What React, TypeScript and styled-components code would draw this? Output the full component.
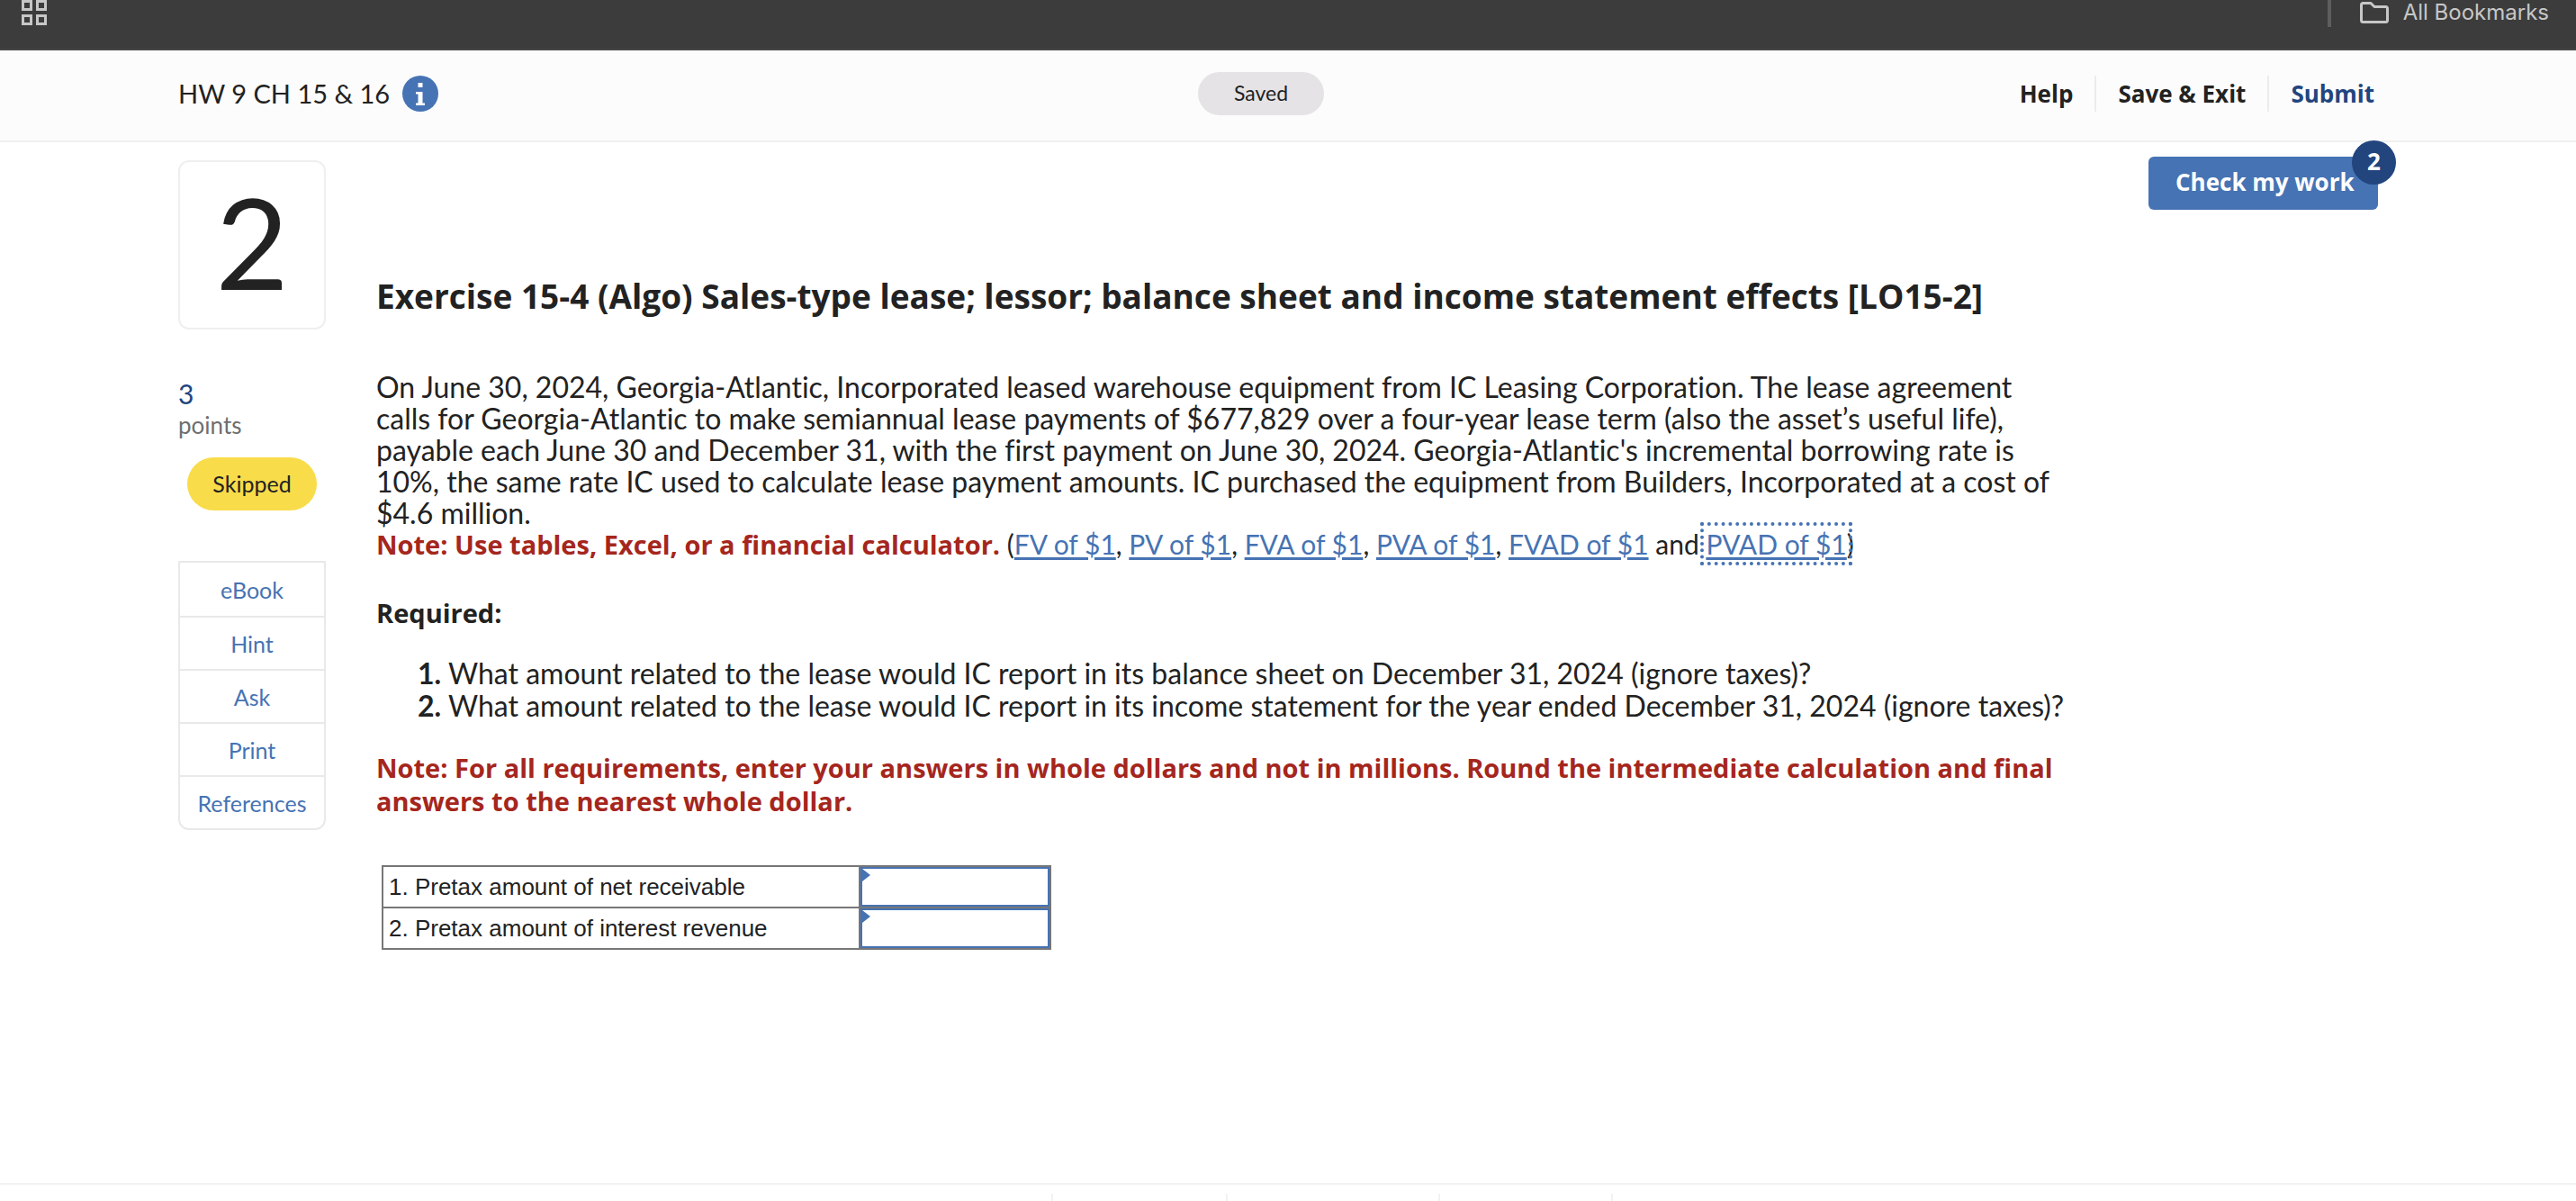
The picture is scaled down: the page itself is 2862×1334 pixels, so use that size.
import React from "react";
import styled, { createGlobalStyle } from "styled-components";

const ink = "#222222";
const blue = "#4673b3";
const navy = "#22457e";
const red = "#a5261d";
const line = "#e9e9e9";
const grid = "#777777";
const boldFamily = `"Open Sans", Lato, sans-serif`;

const GlobalStyle = createGlobalStyle`
  * { box-sizing: border-box; }
  body {
    margin: 0;
    background: #fff;
    color: ${ink};
    font-family: Lato, "Open Sans", sans-serif;
    font-variant-ligatures: none;
  }
  button { font-family: inherit; border: 0; background: none; padding: 0; cursor: pointer; }
  a { color: inherit; text-decoration: none; }
`;

const Page = styled.div`
  min-height: 100vh;
  display: flex;
  flex-direction: column;
`;

const BookmarksBar = styled.div`
  height: 56px;
  background: #3c3c3c;
  border-bottom: 2px solid #464646;
  display: flex;
  justify-content: space-between;
  align-items: flex-start;
  padding: 0 30px 0 24px;
`;

const BarIconButton = styled.button`
  display: block;
  line-height: 0;
`;

const AllBookmarks = styled.button`
  height: 30px;
  border-left: 4px solid #5e5e5e;
  padding: 0 0 2px 32px;
  display: flex;
  align-items: center;
  gap: 16px;
  color: #c7c7c7;
  font: 24px/28px Inter, sans-serif;
`;

const Header = styled.header`
  height: 102px;
  background: #fcfcfc;
  border-bottom: 2px solid #f0f0f0;
  padding: 0 224px 4px 198px;
  display: grid;
  grid-template-columns: 1133fr auto 1167fr;
  align-items: center;
`;

const Assignment = styled.div`
  display: flex;
  align-items: center;
  gap: 14px;
`;

const AssignmentName = styled.h1`
  margin: 0;
  font-size: 29px;
  font-weight: 400;
  line-height: 40px;
`;

const SavedPill = styled.div`
  width: 140px;
  height: 48px;
  border-radius: 24px;
  background: #e5e3e6;
  font-size: 23px;
  line-height: 46px;
  text-align: center;
`;

const HeaderNav = styled.nav`
  display: flex;
  justify-content: flex-end;
`;

const HeaderAction = styled.button<{ $primary?: boolean }>`
  height: 40px;
  padding: 0 24px;
  color: ${(p) => (p.$primary ? navy : ink)};
  font-family: ${boldFamily};
  font-size: 26px;
  font-weight: 700;
  line-height: 36px;
  & + & { border-left: 2px solid #ececec; }
  &:last-child { padding-right: 0; }
`;

const Main = styled.main`
  flex: 1;
  display: flex;
  padding: 0 220px 0 198px;
`;

const Sidebar = styled.aside`
  flex: 0 0 164px;
  padding-top: 20px;
`;

const QuestionNumber = styled.div`
  height: 188px;
  border: 2px solid #efefef;
  border-radius: 12px;
  display: flex;
  justify-content: center;
  font-size: 140px;
  line-height: 176px;
`;

const Points = styled.p`
  margin: 54px 0 0;
  color: #6e6e6e;
  font-size: 26px;
  line-height: 35px;
`;

const PointsValue = styled.span`
  display: block;
  color: ${navy};
  font-size: 30px;
`;

const SkippedPill = styled.div`
  margin: 18px 10px 56px;
  height: 59px;
  border-radius: 30px;
  background: #f9dc4a;
  font-size: 25px;
  line-height: 59px;
  text-align: center;
`;

const Tools = styled.nav`
  border: 2px solid ${line};
  border-radius: 0 0 12px 12px;
  display: flex;
  flex-direction: column;
`;

const Tool = styled.button`
  height: 59px;
  color: ${blue};
  font-size: 25px;
  line-height: 36px;
  & + & { border-top: 2px solid ${line}; }
`;

const Content = styled.article`
  flex: 1;
  max-width: 1890px;
  padding: 149px 0 0 56px;
  font-size: 32px;
  line-height: 35px;
`;

const Title = styled.h2`
  margin: 0 0 61px;
  font-family: ${boldFamily};
  font-size: 37px;
  font-weight: 700;
  line-height: 44px;
  white-space: nowrap;
`;

const Paragraph = styled.p`
  margin: 0;
  white-space: nowrap;
`;

const TablesLine = styled(Paragraph)`
  font-size: 30px;
`;

const Note = styled.strong`
  color: ${red};
  font-family: ${boldFamily};
  font-size: 29px;
  font-weight: 700;
`;

const TableLink = styled.a<{ $focused?: boolean }>`
  color: ${blue};
  text-decoration: underline;
  text-decoration-thickness: 3px;
  text-underline-offset: 3px;
  ${(p) => p.$focused && `outline: 4px dotted ${blue}; outline-offset: 2px;`}
`;

const Required = styled.h3`
  margin: 41px 0 31px;
  font-family: ${boldFamily};
  font-size: 29px;
  font-weight: 700;
  line-height: 36px;
`;

const Requirements = styled.ol`
  margin: 0 0 32px;
  padding: 0 0 0 80px;
  line-height: 36px;
  white-space: nowrap;
  li::marker { font-weight: 700; }
`;

const Rounding = styled.p`
  margin: 0 0 53px;
  line-height: 36px;
  white-space: nowrap;
`;

const Answers = styled.table`
  margin-left: 6px;
  width: 744px;
  border: 2px solid ${grid};
  border-spacing: 0;
  font: 26px/30px "Liberation Sans", Arial, sans-serif;
  tr + tr > * { border-top: 2px solid ${grid}; }
`;

const AnswerLabel = styled.th`
  padding: 0 0 0 6px;
  font-weight: 400;
  text-align: left;
`;

const AnswerCell = styled.td`
  position: relative;
  width: 212px;
  padding: 0;
  border-left: 2px solid ${grid};
  &::before {
    content: "";
    position: absolute;
    left: 2px;
    top: 2px;
    border-left: 9px solid ${blue};
    border-top: 7px solid transparent;
    border-bottom: 7px solid transparent;
  }
`;

const AnswerInput = styled.input`
  display: block;
  width: 100%;
  height: 44px;
  padding: 0 12px;
  border: 2px solid ${blue};
  border-radius: 0;
  background: #fff;
  font: inherit;
  outline: none;
`;

const CheckArea = styled.div`
  margin-left: auto;
  padding-top: 16px;
`;

const CheckButton = styled.button`
  position: relative;
  width: 255px;
  height: 59px;
  padding: 0 0 4px 30px;
  border-radius: 6px;
  background: ${blue};
  color: #fff;
  font-family: ${boldFamily};
  font-size: 26px;
  font-weight: 700;
  line-height: 36px;
  text-align: left;
`;

const CheckBadge = styled.span`
  position: absolute;
  right: -20px;
  top: -18px;
  width: 49px;
  height: 49px;
  border-radius: 50%;
  background: ${navy};
  line-height: 46px;
  text-align: center;
`;

const Footer = styled.footer`
  height: 20px;
  border-top: 2px solid #f2f2f2;
  padding: 10px 0 0 98px;
  display: flex;
  justify-content: center;
`;

const FooterSlot = styled.div<{ $wide?: boolean }>`
  width: ${(p) => (p.$wide ? 236 : 194)}px;
  height: 8px;
  border-left: 2px solid #f2f2f2;
  &:last-child { border-right: 2px solid #f2f2f2; }
`;

const tables = ["FV of $1", "PV of $1", "FVA of $1", "PVA of $1", "FVAD of $1"];
const tools = ["eBook", "Hint", "Ask", "Print", "References"];
const answers = ["1. Pretax amount of net receivable", "2. Pretax amount of interest revenue"];

const AppsIcon = () => (
  <svg width="28" height="28" viewBox="0 0 28 28" fill="none" stroke="#c7c7c7" strokeWidth="3">
    <path d="M1.5 1.5h9v9h-9zM17.500 1.5h9v9h-9zM1.500 17.500h9v9h-9zM17.500 17.500h9v9h-9z" />
  </svg>
);

const FolderIcon = () => (
  <svg width="32" height="24" viewBox="0 0 32 24" fill="none" stroke="#c7c7c7" strokeWidth="3" strokeLinejoin="round">
    <path d="M1.500 3.500q0-2 2-2H12l4 4h12.500q2 0 2 2v13q0 2-2 2h-25q-2 0-2-2z" />
  </svg>
);

const InfoIcon = () => (
  <svg width="40" height="40" viewBox="0 0 40 40">
    <circle cx="20" cy="20" r="20" fill={blue} />
    <path fill="#fff" d="M17.500 8h5v5h-5zM15 18h7.500v12.500H25V33H15v-2.500h2.500V20.500H15z" />
  </svg>
);

export default function App() {
  return (
    <Page>
      <GlobalStyle />
      <BookmarksBar>
        <BarIconButton aria-label="Apps"><AppsIcon /></BarIconButton>
        <AllBookmarks><FolderIcon />All Bookmarks</AllBookmarks>
      </BookmarksBar>

      <Header>
        <Assignment>
          <AssignmentName>HW 9 CH 15 &amp; 16</AssignmentName>
          <BarIconButton aria-label="Assignment information"><InfoIcon /></BarIconButton>
        </Assignment>
        <SavedPill role="status">Saved</SavedPill>
        <HeaderNav>
          <HeaderAction>Help</HeaderAction>
          <HeaderAction>Save &amp; Exit</HeaderAction>
          <HeaderAction $primary>Submit</HeaderAction>
        </HeaderNav>
      </Header>

      <Main>
        <Sidebar>
          <QuestionNumber>2</QuestionNumber>
          <Points><PointsValue>3</PointsValue>points</Points>
          <SkippedPill>Skipped</SkippedPill>
          <Tools>
            {tools.map((t) => <Tool key={t}>{t}</Tool>)}
          </Tools>
        </Sidebar>

        <Content>
          <Title>Exercise 15-4 (Algo) Sales-type lease; lessor; balance sheet and income statement effects [LO15-2]</Title>
          <Paragraph>
            On June 30, 2024, Georgia-Atlantic, Incorporated leased warehouse equipment from IC Leasing Corporation. The lease agreement<br />
            calls for Georgia-Atlantic to make semiannual lease payments of $677,829 over a four-year lease term (also the asset’s useful life),<br />
            payable each June 30 and December 31, with the first payment on June 30, 2024. Georgia-Atlantic's incremental borrowing rate is<br />
            10%, the same rate IC used to calculate lease payment amounts. IC purchased the equipment from Builders, Incorporated at a cost of<br />
            $4.6 million.
          </Paragraph>
          <TablesLine>
            <Note>Note: Use tables, Excel, or a financial calculator.</Note> (
            {tables.map((t, i) => (
              <React.Fragment key={t}>
                {i > 0 && ", "}
                <TableLink href="#">{t}</TableLink>
              </React.Fragment>
            ))}
            {" and "}
            <TableLink href="#" $focused>PVAD of $1</TableLink>)
          </TablesLine>
          <Required>Required:</Required>
          <Requirements>
            <li>What amount related to the lease would IC report in its balance sheet on December 31, 2024 (ignore taxes)?</li>
            <li>What amount related to the lease would IC report in its income statement for the year ended December 31, 2024 (ignore taxes)?</li>
          </Requirements>
          <Rounding>
            <Note>
              Note: For all requirements, enter your answers in whole dollars and not in millions. Round the intermediate calculation and final<br />
              answers to the nearest whole dollar.
            </Note>
          </Rounding>
          <Answers>
            <tbody>
              {answers.map((a, i) => (
                <tr key={a}>
                  <AnswerLabel scope="row"><label htmlFor={`answer-${i}`}>{a}</label></AnswerLabel>
                  <AnswerCell><AnswerInput id={`answer-${i}`} type="text" /></AnswerCell>
                </tr>
              ))}
            </tbody>
          </Answers>
        </Content>

        <CheckArea>
          <CheckButton>Check my work<CheckBadge>2</CheckBadge></CheckButton>
        </CheckArea>
      </Main>

      <Footer>
        <FooterSlot />
        <FooterSlot $wide />
        <FooterSlot />
      </Footer>
    </Page>
  );
}
